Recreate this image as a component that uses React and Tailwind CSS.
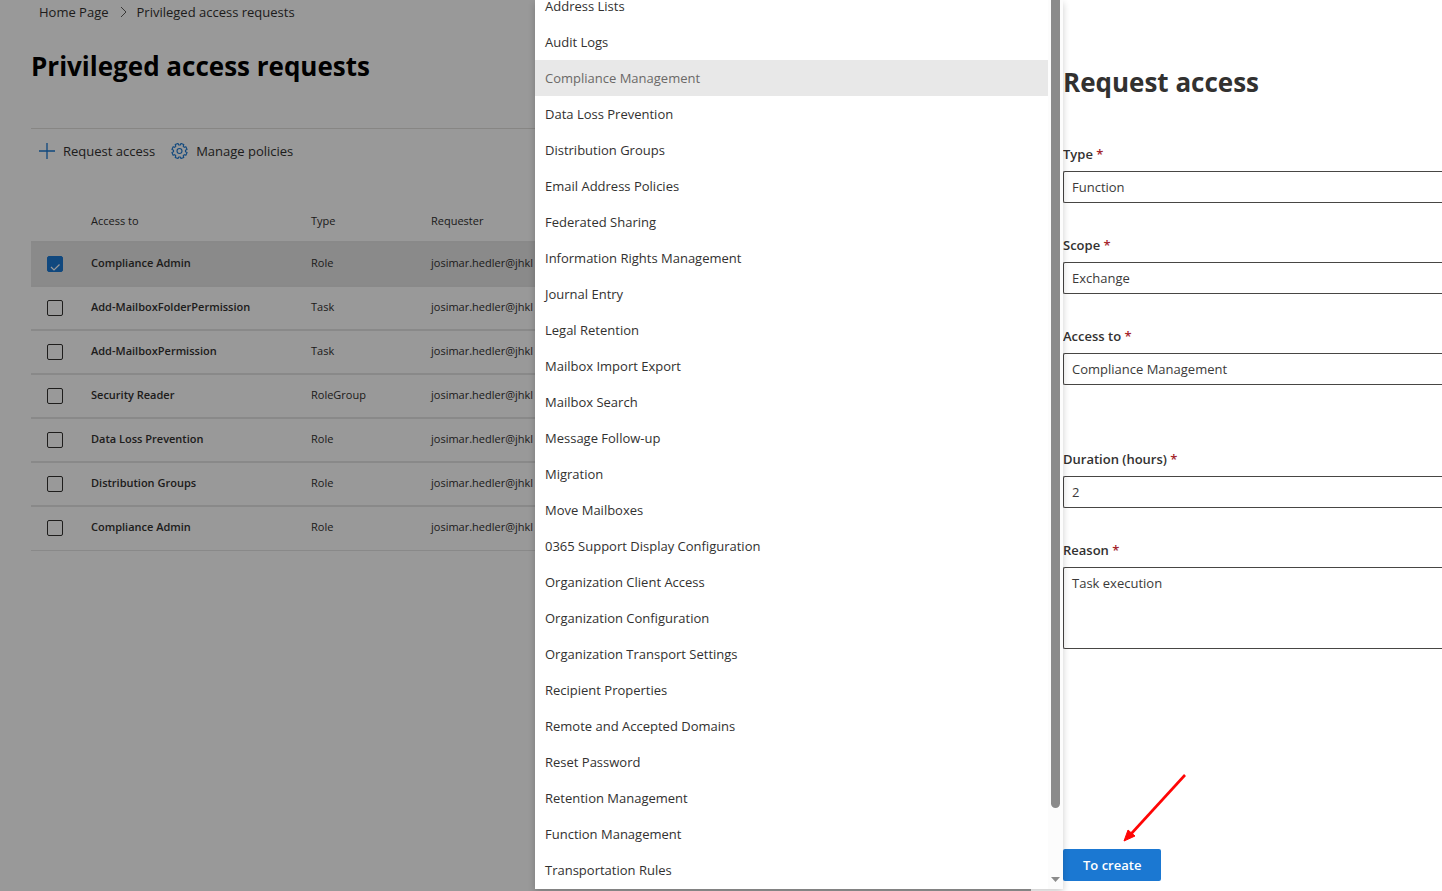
import { useState } from "react";

const requests = [
  { id: 1, access: "Compliance Admin", type: "Role" },
  { id: 2, access: "Add-MailboxFolderPermission", type: "Task" },
  { id: 3, access: "Add-MailboxPermission", type: "Task" },
  { id: 4, access: "Security Reader", type: "RoleGroup" },
  { id: 5, access: "Data Loss Prevention", type: "Role" },
  { id: 6, access: "Distribution Groups", type: "Role" },
  { id: 7, access: "Compliance Admin", type: "Role" },
];

const roles = [
  "Address Lists",
  "Audit Logs",
  "Compliance Management",
  "Data Loss Prevention",
  "Distribution Groups",
  "Email Address Policies",
  "Federated Sharing",
  "Information Rights Management",
  "Journal Entry",
  "Legal Retention",
  "Mailbox Import Export",
  "Mailbox Search",
  "Message Follow-up",
  "Migration",
  "Move Mailboxes",
  "0365 Support Display Configuration",
  "Organization Client Access",
  "Organization Configuration",
  "Organization Transport Settings",
  "Recipient Properties",
  "Remote and Accepted Domains",
  "Reset Password",
  "Retention Management",
  "Function Management",
  "Transportation Rules",
];

// Eight teeth, four points each: inner, outer, outer, inner
const gearPoints = Array.from({ length: 8 }, (_, i) => {
  const mid = (i * 45 + 22.5) * (Math.PI / 180);
  return [
    [6, -0.26],
    [7.7, -0.2],
    [7.7, 0.2],
    [6, 0.26],
  ]
    .map(([r, a]) => `${8 + r * Math.cos(mid + a)},${8 + r * Math.sin(mid + a)}`)
    .join(" ");
}).join(" ");

function PlusIcon() {
  return (
    <svg width="16" height="16" viewBox="0 0 16 16" aria-hidden="true">
      <path d="M8 0v16M0 8h16" stroke="#1b78d2" strokeWidth="1.3" fill="none" />
    </svg>
  );
}

function GearIcon() {
  return (
    <svg
      width="17"
      height="16"
      viewBox="0 0 16 16"
      fill="none"
      stroke="#1b78d2"
      strokeWidth="1.1"
      aria-hidden="true"
    >
      <polygon strokeLinejoin="round" points={gearPoints} />
      <circle cx="8" cy="8" r="2.5" />
    </svg>
  );
}

function RowCheckbox({ label, checked, onChange }) {
  return (
    <label className="grid size-4 place-items-center">
      <input
        type="checkbox"
        aria-label={label}
        checked={checked}
        onChange={onChange}
        className="col-start-1 row-start-1 size-4 appearance-none rounded-xs border border-[#323130] checked:border-[#1b78d2] checked:bg-[#1b78d2]"
      />
      {checked && (
        <svg
          className="pointer-events-none z-0 col-start-1 row-start-1"
          width="16"
          height="16"
          viewBox="0 0 16 16"
          aria-hidden="true"
        >
          <path d="M4 11l3 3 5.5-5.5" stroke="#fff" strokeWidth="1.2" fill="none" />
        </svg>
      )}
    </label>
  );
}

function Field({ id, label, children }) {
  return (
    <div className="flex flex-col">
      <label
        htmlFor={id}
        className="pt-px pb-[7px] text-[13px] leading-5 font-semibold text-[#323130]"
      >
        {label} <span className="text-[#a4262c]">*</span>
      </label>
      {children}
    </div>
  );
}

const inputClass =
  "h-8 w-full rounded-l-xs border border-r-0 border-[#484644] bg-transparent px-2 text-[13px] text-[#3b3a39]";

export default function App() {
  const [selected, setSelected] = useState([1]);
  const [role, setRole] = useState("Compliance Management");

  function toggle(id) {
    setSelected((prev) =>
      prev.includes(id) ? prev.filter((x) => x !== id) : [...prev, id],
    );
  }

  return (
    <div className="relative h-screen overflow-hidden bg-white font-['Open_Sans','Noto_Sans',sans-serif] text-[#323130]">
      <main className="pl-[31px]">
        <nav className="flex items-center gap-2 pt-0.5 pl-2 text-[13px] leading-5">
          <a href="#home">Home Page</a>
          <svg
            width="12"
            height="12"
            viewBox="0 0 12 12"
            fill="none"
            stroke="#605e5c"
            aria-hidden="true"
          >
            <path d="M4 1l5 5-5 5" />
          </svg>
          <a href="#requests">Privileged access requests</a>
        </nav>
        <h1 className="pt-6 text-[26px] leading-10 font-bold text-black">
          Privileged access requests
        </h1>
        <div className="mt-[42px] flex items-center gap-4 border-t border-[#e1dfdd] pt-3 pl-2 text-[13px] leading-5">
          <button className="flex items-center gap-2">
            <PlusIcon />
            Request access
          </button>
          <button className="flex items-center gap-2">
            <GearIcon />
            Manage policies
          </button>
        </div>

        <table className="mt-[37px] w-full table-fixed border-collapse text-left text-[11px]">
          <colgroup>
            <col className="w-[60px]" />
            <col className="w-[220px]" />
            <col className="w-[120px]" />
            <col />
          </colgroup>
          <thead>
            <tr className="h-11 border-b-2 border-[#e4e4e4]">
              <th></th>
              <th className="pt-1 font-normal">Access to</th>
              <th className="pt-1 font-normal">Type</th>
              <th className="pt-1 font-normal">Requester</th>
            </tr>
          </thead>
          <tbody>
            {requests.map((r) => (
              <tr
                key={r.id}
                className={`h-11 border-b-2 border-[#e4e4e4] last:border-b ${
                  selected.includes(r.id) ? "bg-[#e6e6e6]" : ""
                }`}
              >
                <td className="pl-4">
                  <RowCheckbox
                    label={`Select ${r.access}`}
                    checked={selected.includes(r.id)}
                    onChange={() => toggle(r.id)}
                  />
                </td>
                <td className="pb-0.5 font-semibold">{r.access}</td>
                <td className="pb-0.5">{r.type}</td>
                <td className="pb-0.5">josimar.hedler@jhkl</td>
              </tr>
            ))}
          </tbody>
        </table>
      </main>

      {/* Backdrop + side panel */}
      <div className="absolute inset-0 flex justify-end bg-black/40">
        <aside className="flex w-[411px] flex-col bg-white pt-[62px] pb-2.5 pl-8">
          <h2 className="text-[26px] leading-10 font-bold">Request access</h2>
          <form
            className="flex flex-1 flex-col pt-[41px]"
            onSubmit={(e) => e.preventDefault()}
          >
            <div className="flex flex-col gap-[31px]">
              <Field id="type" label="Type">
                <input id="type" className={inputClass} defaultValue="Function" />
              </Field>
              <Field id="scope" label="Scope">
                <input id="scope" className={inputClass} defaultValue="Exchange" />
              </Field>
              <Field id="access" label="Access to">
                <input id="access" className={inputClass} value={role} readOnly />
              </Field>
            </div>
            <div className="flex flex-col gap-[31px] pt-[63px]">
              <Field id="duration" label="Duration (hours)">
                <input id="duration" className={inputClass} defaultValue="2" />
              </Field>
              <Field id="reason" label="Reason">
                <textarea
                  id="reason"
                  className="h-[82px] w-full resize-none rounded-l-xs border border-r-0 border-[#484644] bg-transparent px-2 py-[5px] text-[13px] leading-5 text-[#3b3a39]"
                  defaultValue="Task execution"
                />
              </Field>
            </div>
            <button className="mt-auto h-8 self-start rounded-xs bg-[#1b78d2] px-5 pt-0.5 text-[13px] font-semibold text-white">
              To create
            </button>
          </form>
        </aside>
      </div>

      {/* Role picker */}
      <div className="absolute top-0 right-[379px] bottom-0.5 flex w-[528px] bg-white shadow-[0_3px_7px_rgba(0,0,0,0.2)]">
        <div
          role="listbox"
          aria-label="Access to"
          className="flex flex-1 flex-col justify-end overflow-hidden pb-px"
        >
          {roles.map((name) => (
            <button
              key={name}
              role="option"
              aria-selected={name === role}
              onClick={() => setRole(name)}
              className={`h-9 shrink-0 px-2.5 pt-0.5 text-left text-[13px] ${
                name === role ? "bg-[#e8e8e8] text-[#6b6967]" : "hover:bg-[#f3f2f1]"
              }`}
            >
              {name}
            </button>
          ))}
        </div>
        <div className="flex w-[15px] flex-col items-center bg-[#fcfcfc]">
          <div className="w-[9px] flex-1 rounded-b-full bg-[#8b8b8b]"></div>
          <div className="flex h-[81px] items-end pb-[7px]">
            <svg width="9" height="5" viewBox="0 0 9 5" aria-hidden="true">
              <path d="M0 0h9L4.500 5z" fill="#8b8b8b" />
            </svg>
          </div>
        </div>
      </div>

      {/* Arrow pointing at the submit button */}
      <svg
        className="pointer-events-none absolute right-[255px] bottom-[49px]"
        width="64"
        height="68"
        viewBox="0 0 64 68"
        aria-hidden="true"
      >
        <path d="M62 1L8 60" stroke="#ff0505" strokeWidth="2.6" fill="none" />
        <path d="M1 67L5 56l7 6z" fill="#ff0505" stroke="#ff0505" />
      </svg>
    </div>
  );
}
